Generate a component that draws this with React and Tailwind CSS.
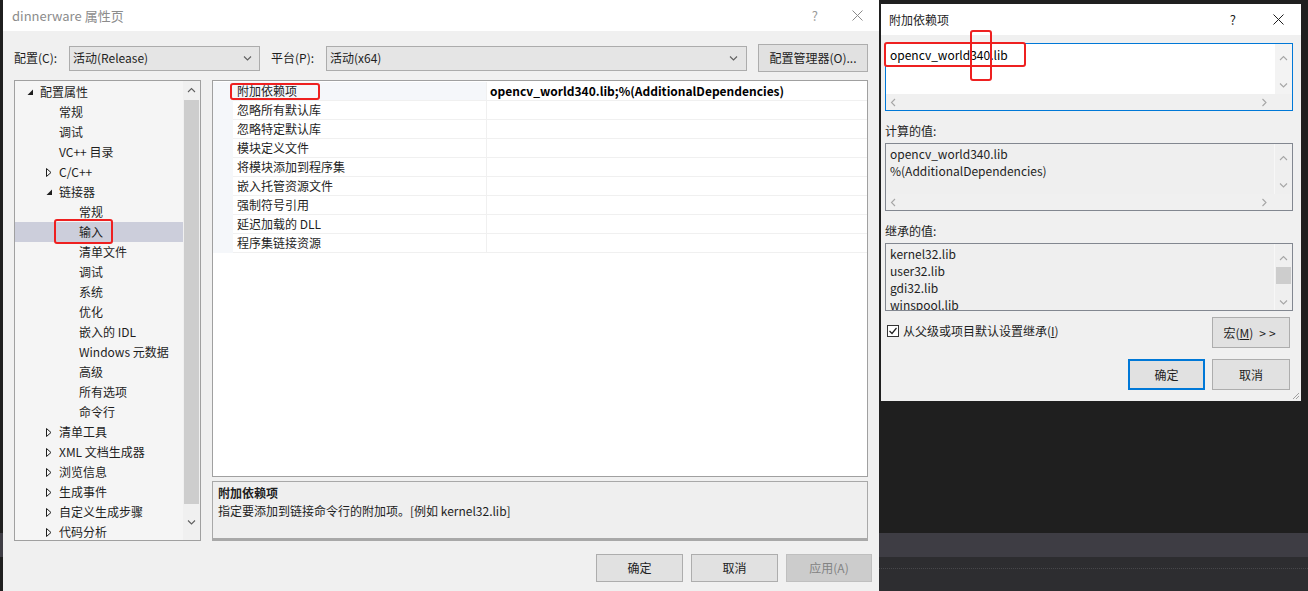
import React from 'react';

const font = "font-[family-name:'Noto_Sans_CJK_SC','Noto_Sans',sans-serif]";

const Chevron = ({ dir = 'down', color = '#606060', size = 9 }) => {
  const pts = {
    up: '1,5 4.5,1.5 8,5',
    down: '1,1.5 4.5,5 8,1.5',
    left: '5,1 1.5,4.5 5,8',
    right: '1.5,1 5,4.5 1.5,8',
  }[dir];
  const vertical = dir === 'up' || dir === 'down';
  return (
    <svg width={vertical ? size : 7} height={vertical ? 7 : size} viewBox={vertical ? '0 0 9 7' : '0 0 7 9'}>
      <polyline points={pts} fill="none" stroke={color} strokeWidth="1.1" />
    </svg>
  );
};

const CloseIcon = ({ color }) => (
  <svg width="11" height="11" viewBox="0 0 11 11">
    <line x1="0.5" y1="0.5" x2="10.5" y2="10.5" stroke={color} strokeWidth="1" />
    <line x1="10.5" y1="0.5" x2="0.5" y2="10.5" stroke={color} strokeWidth="1" />
  </svg>
);

const Expanded = () => (
  <svg width="7" height="7" viewBox="0 0 7 7">
    <polygon points="6,0.5 6,6 0.5,6" fill="#1e1e1e" />
  </svg>
);

const Collapsed = () => (
  <svg width="6" height="9" viewBox="0 0 6 9">
    <polygon points="0.5,0.5 5,4.5 0.5,8.5" fill="none" stroke="#1e1e1e" strokeWidth="1" />
  </svg>
);

// tree rows: [label, level, state, selected]
const treeItems = [
  ['配置属性', 0, 'open'],
  ['常规', 1],
  ['调试', 1],
  ['VC++ 目录', 1],
  ['C/C++', 1, 'closed'],
  ['链接器', 1, 'open'],
  ['常规', 2],
  ['输入', 2, null, true],
  ['清单文件', 2],
  ['调试', 2],
  ['系统', 2],
  ['优化', 2],
  ['嵌入的 IDL', 2],
  ['Windows 元数据', 2],
  ['高级', 2],
  ['所有选项', 2],
  ['命令行', 2],
  ['清单工具', 1, 'closed'],
  ['XML 文档生成器', 1, 'closed'],
  ['浏览信息', 1, 'closed'],
  ['生成事件', 1, 'closed'],
  ['自定义生成步骤', 1, 'closed'],
  ['代码分析', 1, 'closed'],
];

const props = [
  '附加依赖项',
  '忽略所有默认库',
  '忽略特定默认库',
  '模块定义文件',
  '将模块添加到程序集',
  '嵌入托管资源文件',
  '强制符号引用',
  '延迟加载的 DLL',
  '程序集链接资源',
];

const TreeRow = ({ label, level, state, selected }) => (
  <div className={`relative h-[20px] shrink-0 flex items-center ${selected ? 'bg-[#cccedb]' : ''}`}>
    {level === 2 ? (
      <span className="pl-[64px]">{label}</span>
    ) : (
      <>
        <div className={`${level === 0 ? 'pl-[12px]' : 'pl-[31px]'} flex items-center`}>
          <div className="w-[13px] flex items-center">
            {state === 'open' && <Expanded />}
            {state === 'closed' && <Collapsed />}
          </div>
        </div>
        <span>{label}</span>
      </>
    )}
    {selected && (
      <div className="absolute left-[39px] top-[-3px] w-[59px] h-[25px] border-[2.5px] border-[#ee2020] rounded-[3px]" />
    )}
  </div>
);

const Button = ({ children, className = '' }) => (
  <div className={`flex items-center justify-center bg-[#e1e1e1] border border-[#adadad] ${className}`}>{children}</div>
);

function LeftWindow() {
  return (
    <div className={`w-[876px] h-[591px] bg-[#f0f0f0] flex flex-col text-[12px] text-[#1e1e1e] ${font}`}>
      <div className="h-[31px] bg-white flex items-center pl-[9px] pr-[16px] shrink-0">
        <span className="text-[#8c8c8c] text-[13px]">dinnerware 属性页</span>
        <span className="ml-auto text-[#9a9a9a] text-[13px] mr-[34px]">?</span>
        <CloseIcon color="#8a8a8a" />
      </div>

      <div className="flex items-center mt-[13px] pl-[11px] h-[28px] shrink-0">
        <span className="w-[55px]">配置(C):</span>
        <div className="w-[191px] h-[25px] bg-[#e5e5e5] border border-[#acacac] flex items-center pl-[3px] pr-[7px]">
          <span>活动(Release)</span>
          <span className="ml-auto"><Chevron /></span>
        </div>
        <span className="ml-[11px] w-[55px]">平台(P):</span>
        <div className="w-[421px] h-[25px] bg-[#e5e5e5] border border-[#acacac] flex items-center pl-[3px] pr-[8px]">
          <span>活动(x64)</span>
          <span className="ml-auto"><Chevron /></span>
        </div>
        <Button className="ml-[11px] w-[110px] h-[28px]">配置管理器(O)...</Button>
      </div>

      <div className="flex mt-[8px] pl-[11px] h-[461px] shrink-0">
        <div className="w-[187px] h-[461px] border border-[#a0a0a0] bg-[#f5f5f5] flex overflow-hidden">
          <div className="flex-1 flex flex-col overflow-hidden pt-[1px]">
            {treeItems.map(([label, level, state, selected], i) => (
              <TreeRow key={i} label={label} level={level} state={state} selected={selected} />
            ))}
          </div>
          <div className="w-[17px] bg-[#f0f0f0] flex flex-col items-center">
            <div className="h-[19px] flex items-center"><Chevron dir="up" /></div>
            <div className="w-[15px] h-[404px] bg-[#cdcdcd]" />
            <div className="flex-1 flex items-center"><Chevron dir="down" /></div>
          </div>
        </div>

        <div className="ml-[11px] w-[656px] flex flex-col">
          <div className="h-[398px] border border-[#a0a0a0] bg-white relative pt-[1px]">
            {props.map((p, i) => (
              <div key={i} className="flex h-[19px]">
                <div className="w-[20px] bg-[#f5f7fa]" />
                <div className={`w-[253px] border-b border-[#f0f0f0] flex items-center pl-[4px] ${i === 0 ? 'bg-[#f5f7fa]' : ''}`}>{p}</div>
                <div className="flex-1 border-b border-l border-[#f0f0f0] flex items-center pl-[3px] font-bold text-black">
                  {i === 0 ? 'opencv_world340.lib;%(AdditionalDependencies)' : ''}
                </div>
              </div>
            ))}
            <div className="absolute left-[17px] top-[2px] w-[90px] h-[17px] border-[2.5px] border-[#ee2020] rounded-[3px]" />
          </div>
          <div className="mt-[4px] h-[60px] border border-b-[3px] border-[#a8a8a8] bg-[#efefef] pl-[5px] pt-[2px]">
            <div className="font-bold leading-[17px]">附加依赖项</div>
            <div className="leading-[19px]">指定要添加到链接命令行的附加项。[例如 kernel32.lib]</div>
          </div>
        </div>
      </div>

      <div className="flex justify-end gap-[8px] pr-[7px] mt-[13px]">
        <Button className="w-[87px] h-[28px]">确定</Button>
        <Button className="w-[87px] h-[28px]">取消</Button>
        <div className="w-[86px] h-[28px] flex items-center justify-center bg-[#cccccc] border border-[#bfbfbf] text-[#838383]">应用(A)</div>
      </div>
    </div>
  );
}

const ScrollV = ({ thumb, hasH }) => (
  <div className="w-[17px] flex flex-col items-center">
    <div className="h-[18px] flex items-end justify-center"><Chevron dir="up" color="#a6a6a6" /></div>
    {thumb && <div className="mt-[5px] w-[15px] h-[17px] bg-[#cdcdcd]" />}
    <div className={`flex-1 flex items-end justify-center ${hasH ? 'pb-[5px]' : 'pb-[4px]'}`}><Chevron dir="down" color="#a6a6a6" /></div>
  </div>
);

const ScrollH = () => (
  <div className="h-[16px] flex items-center px-[4px] bg-[#f0f0f0]">
    <Chevron dir="left" color="#a6a6a6" />
    <span className="ml-auto mr-[20px]"><Chevron dir="right" color="#a6a6a6" /></span>
  </div>
);

function RightWindow() {
  return (
    <div className={`w-[420px] h-[397px] bg-[#f0f0f0] flex flex-col text-[12px] text-[#1e1e1e] ${font} relative`}>
      <div className="h-[31px] bg-white flex items-center pl-[8px] shrink-0">
        <span>附加依赖项</span>
        <span className="ml-auto text-[13px] mr-[37px]">?</span>
        <span className="mr-[17px]"><CloseIcon color="#1e1e1e" /></span>
      </div>

      <div className="pl-[4px] pr-[8px] flex flex-col">
        <div className="mt-[8px] h-[68px] border border-[#0078d7] bg-white flex flex-col relative">
          <div className="flex flex-1">
            <div className="flex-1 pl-[4px] pt-[2px] leading-[17px] text-black">opencv_world340.lib</div>
            <div className="bg-[#f3f3f3] flex"><ScrollV hasH /></div>
          </div>
          <ScrollH />
          <div className="absolute left-[-2px] top-[-2px] w-[142px] h-[25px] border-[2.5px] border-[#ee2020] rounded-[3px]" />
          <div className="absolute left-[84px] top-[-14px] w-[22px] h-[51px] border-[2.5px] border-[#ee2020] rounded-[3px]" />
        </div>

        <div className="mt-[11px] leading-[17px]">计算的值:</div>
        <div className="mt-[4px] h-[68px] border border-[#828790] bg-[#efefef] flex flex-col">
          <div className="flex flex-1">
            <div className="flex-1 pl-[4px] pt-[1px] leading-[17px]">
              <div>opencv_world340.lib</div>
              <div>%(AdditionalDependencies)</div>
            </div>
            <div className="flex border-l border-[#f7f7f7]"><ScrollV hasH /></div>
          </div>
          <ScrollH />
        </div>

        <div className="mt-[11px] leading-[17px]">继承的值:</div>
        <div className="mt-[4px] h-[68px] border border-[#828790] bg-[#efefef] flex overflow-hidden">
          <div className="flex-1 pl-[4px] pt-[1px] leading-[17px] h-[66px] overflow-hidden">
            <div>kernel32.lib</div>
            <div>user32.lib</div>
            <div>gdi32.lib</div>
            <div>winspool.lib</div>
          </div>
          <div className="flex border-l border-[#f7f7f7]"><ScrollV thumb /></div>
        </div>

        <div className="flex items-start mt-[6px]">
          <div className="flex items-center mt-[5px] pl-[2px]">
            <div className="w-[12px] h-[12px] border border-[#333333] bg-white flex items-center justify-center">
              <svg width="10" height="10" viewBox="0 0 10 10">
                <polyline points="1.5,5 4,7.5 8.5,2" fill="none" stroke="#222222" strokeWidth="1.2" />
              </svg>
            </div>
            <span className="ml-[4px]">从父级或项目默认设置继承(<span className="underline">I</span>)</span>
          </div>
          <Button className="ml-auto mr-[3px] w-[78px] h-[31px]">
            <span>宏(<span className="underline">M</span>)</span>
            <span className="ml-[6px] tracking-[3px]">&gt;&gt;</span>
          </Button>
        </div>

        <div className="flex justify-end gap-[7px] mt-[11px] mr-[3px]">
          <div className="w-[77px] h-[31px] flex items-center justify-center bg-[#e1e1e1] border-2 border-[#0078d7]">确定</div>
          <Button className="w-[78px] h-[31px]">取消</Button>
        </div>
      </div>

      <svg className="absolute right-[1px] bottom-[1px]" width="10" height="10" viewBox="0 0 10 10">
        <line x1="9" y1="3" x2="3" y2="9" stroke="#a0a0a0" strokeWidth="1" />
        <line x1="9" y1="6" x2="6" y2="9" stroke="#a0a0a0" strokeWidth="1" />
      </svg>
    </div>
  );
}

export default function App() {
  return (
    <div className="w-[1308px] h-[591px] flex bg-[#1f1f1f] overflow-hidden">
      <div className="w-[3px] flex flex-col">
        <div className="h-[533px]" />
        <div className="h-[24px] bg-[#3e3d44]" />
      </div>
      <LeftWindow />
      <div className="w-[429px] flex flex-col">
        <div className="pl-[2px] pt-[4px]">
          <RightWindow />
        </div>
        <div className="flex-1" />
        <div className="h-[24px] bg-[#3e3d44]" />
        <div className="h-[34px] bg-[#2d2d30] pt-[11px]">
          <div className="border-t border-dotted border-[#47474b]" />
        </div>
      </div>
    </div>
  );
}
